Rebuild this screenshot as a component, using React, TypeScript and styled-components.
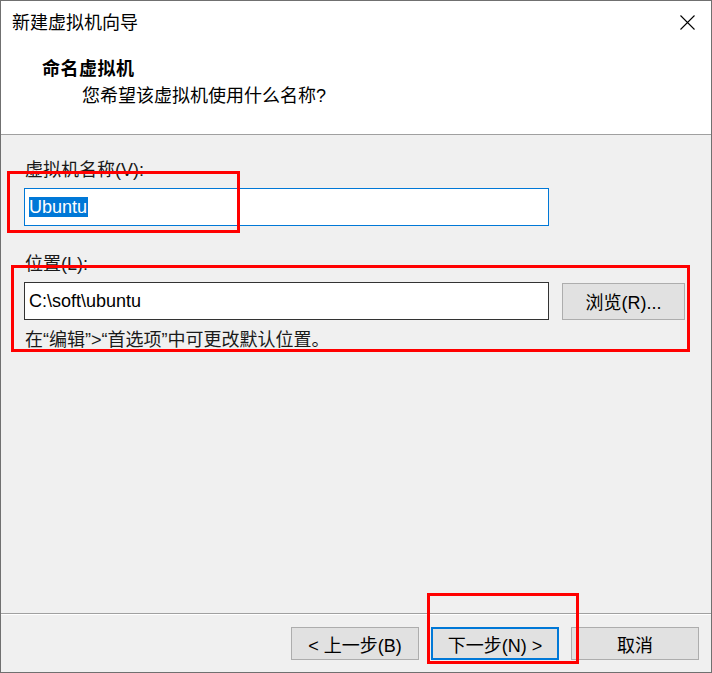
import React from "react";
import styled, { createGlobalStyle } from "styled-components";

const GlobalStyle = createGlobalStyle`
  html, body { margin: 0; padding: 0; background: #ffffff; }
  * { box-sizing: border-box; }
`;

const FONT = `"Liberation Sans", "Noto Sans CJK SC", sans-serif`;

const Window = styled.div`
  position: relative;
  width: 712px;
  height: 673px;
  border: 1px solid #707070;
  background: #f0f0f0;
  display: flex;
  flex-direction: column;
  font-family: ${FONT};
  font-size: 18px;
  color: #000;
  overflow: hidden;
`;

const Header = styled.header`
  height: 134px;
  flex: none;
  background: #ffffff;
  border-bottom: 1px solid #a0a0a0;
  display: flex;
  flex-direction: column;
`;

const TitleBar = styled.div`
  height: 44px;
  display: flex;
  align-items: center;
  justify-content: space-between;
  padding: 0 16px 0 11px;
`;

const TitleText = styled.span`
  font-size: 18px;
  line-height: 24px;
`;

const CloseIcon = styled.svg`
  width: 15px;
  height: 15px;
  display: block;
  margin-top: -1px;
`;

const HeadingBlock = styled.div`
  padding: 11px 0 0 41px;
  display: flex;
  flex-direction: column;
`;

const Heading = styled.div`
  font-weight: bold;
  font-size: 18px;
  line-height: 26px;
  letter-spacing: 0.5px;
`;

const SubHeading = styled.div`
  font-size: 18px;
  line-height: 28px;
  padding-left: 40px;
`;

const Body = styled.main`
  flex: 1;
  padding: 23px 0 0 23px;
  display: flex;
  flex-direction: column;
`;

const FieldLabel = styled.div<{ $gap?: number }>`
  line-height: 24px;
  padding-left: 1px;
  margin-top: ${(p) => p.$gap ?? 0}px;
  color: #1a1a1a;
`;

const TextBox = styled.div<{ $focused?: boolean }>`
  width: 525px;
  height: 38px;
  background: #ffffff;
  border: 1px solid ${(p) => (p.$focused ? "#0078d7" : "#333333")};
  display: flex;
  align-items: center;
  padding-left: 4px;
  line-height: 20px;
`;

const Selected = styled.span`
  background: #0078d7;
  color: #ffffff;
  line-height: 20px;
  padding-right: 1px;
`;

const Row = styled.div`
  display: flex;
  align-items: center;
  gap: 13px;
  margin-top: 6px;
`;

const Button = styled.button<{ $width?: number; $default?: boolean }>`
  width: ${(p) => p.$width ?? 128}px;
  height: ${(p) => (p.$default ? 33 : 33)}px;
  background: #e1e1e1;
  border: ${(p) => (p.$default ? "2px solid #0078d7" : "1px solid #adadad")};
  font-family: ${FONT};
  font-size: 18px;
  color: #000;
  padding: 0;
  display: flex;
  align-items: center;
  justify-content: center;
  white-space: pre;
`;

const BrowseButton = styled(Button)`
  height: 37px;
`;

const Hint = styled.div`
  margin-top: 8px;
  line-height: 24px;
  padding-left: 1px;
  color: #1a1a1a;
`;

const Footer = styled.footer`
  flex: none;
  height: 59px;
  border-top: 1px solid #a0a0a0;
  box-shadow: inset 0 1px 0 #ffffff;
  display: flex;
  justify-content: flex-end;
  align-items: flex-start;
  gap: 12px;
  padding: 13px 12px 0 0;
`;

const Annotation = styled.div<{ $x: number; $y: number; $w: number; $h: number }>`
  position: absolute;
  left: ${(p) => p.$x - 1}px;
  top: ${(p) => p.$y - 1}px;
  width: ${(p) => p.$w}px;
  height: ${(p) => p.$h}px;
  border: 3px solid #ff0000;
  pointer-events: none;
`;

export default function App() {
  return (
    <>
      <GlobalStyle />
      <Window>
        <Header>
          <TitleBar>
            <TitleText>新建虚拟机向导</TitleText>
            <CloseIcon viewBox="0 0 15 15">
              <path d="M0.5 0.5 L14.5 14.5 M14.5 0.5 L0.5 14.5" stroke="#000" strokeWidth="1.1" fill="none" />
            </CloseIcon>
          </TitleBar>
          <HeadingBlock>
            <Heading>命名虚拟机</Heading>
            <SubHeading>您希望该虚拟机使用什么名称?</SubHeading>
          </HeadingBlock>
        </Header>
        <Body>
          <FieldLabel>虚拟机名称(V):</FieldLabel>
          <Row>
            <TextBox $focused>
              <Selected>Ubuntu</Selected>
            </TextBox>
          </Row>
          <FieldLabel $gap={26}>位置(L):</FieldLabel>
          <Row>
            <TextBox>C:\soft\ubuntu</TextBox>
            <BrowseButton $width={123}>浏览(R)...</BrowseButton>
          </Row>
          <Hint>在“编辑”&gt;“首选项”中可更改默认位置。</Hint>
        </Body>
        <Footer>
          <Button>{"< 上一步(B)"}</Button>
          <Button $default>{"下一步(N) >"}</Button>
          <Button>取消</Button>
        </Footer>
        <Annotation $x={7} $y={171} $w={233} $h={62} />
        <Annotation $x={11} $y={265} $w={679} $h={87} />
        <Annotation $x={427} $y={593} $w={152} $h={71} />
      </Window>
    </>
  );
}
